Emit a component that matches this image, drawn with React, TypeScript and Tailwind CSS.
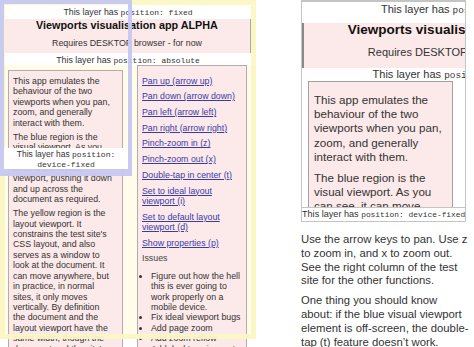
import React from "react";

const mono = "font-['Liberation_Mono','Courier_New',monospace]";

const links: string[][] = [
  ["Pan up (arrow up)"],
  ["Pan down (arrow down)"],
  ["Pan left (arrow left)"],
  ["Pan right (arrow right)"],
  ["Pinch-zoom in (z)"],
  ["Pinch-zoom out (x)"],
  ["Double-tap in center (t)"],
  ["Set to ideal layout", "viewport (i)"],
  ["Set to default layout", "viewport (d)"],
  ["Show properties (p)"],
];

const issues: string[][] = [
  ["Figure out how the hell", "this is ever going to", "work properly on a", "mobile device."],
  ["Fix ideal viewport bugs"],
  ["Add page zoom"],
  ["Add zoom reflow"],
  ["Add desktop viewport"],
];

const Lines = ({ lines }: { lines: string[] }) => (
  <>
    {lines.map((l, i) => (
      <React.Fragment key={i}>
        {l}
        {i < lines.length - 1 && <br />}
      </React.Fragment>
    ))}
  </>
);

const intro = [
  ["This app emulates the", "behaviour of the two", "viewports when you pan,", "zoom, and generally", "interact with them."],
  [
    "The blue region is the",
    "visual viewport. As you",
    "can see, it can move",
    "around the layout",
    "viewport, pushing it down",
    "and up across the",
    "document as required.",
  ],
  [
    "The yellow region is the",
    "layout viewport. It",
    "constrains the test site's",
    "CSS layout, and also",
    "serves as a window to",
    "look at the document. It",
    "can move anywhere, but",
    "in practice, in normal",
    "sites, it only moves",
    "vertically. By definition",
    "the document and the",
    "layout viewport have the",
    "same width, though the",
    "document and the site's",
  ],
];

const LeftSim = () => (
  <div className="relative w-[265px] h-[347px] overflow-hidden shrink-0 bg-white">
    <div className="absolute left-0 top-0 w-[256px] h-[339px] bg-[#fffdea]" />

    {/* document */}
    <div className="relative w-[256px] text-[#333] whitespace-nowrap">
      <div className="h-[19px] bg-white pt-[6px] text-center text-[8.8px] leading-[12px]">
        This layer has <span className={`${mono} text-[8px]`}>position: fixed</span>
      </div>
      <div className="w-[251px] h-[34px] bg-[#fce9e9] border-r border-[#a8a8a8] pl-[4px] text-center">
        <div className="font-bold text-[10.8px] leading-[12px] text-[#111]">Viewports visualisation app ALPHA</div>
        <div className="mt-[7px] text-[8.8px] leading-[10px]">Requires DESKTOP browser - for now</div>
      </div>
      <div className="h-[12px] bg-white pt-[2px] text-center text-[8.8px] leading-[10px]">
        This layer has <span className={`${mono} text-[8px]`}>position: absolute</span>
      </div>

      <div className="flex items-start">
        <div className="ml-[8px] mt-[5px] w-[115px] border border-[#b4acac] bg-[#fce9e9] pl-[4px] pt-[5px] pb-[20px] text-[8.8px] leading-[10.4px]">
          {intro.map((p, i) => (
            <p key={i} className={i > 0 ? "mt-[3.7px]" : ""}>
              <Lines lines={p} />
            </p>
          ))}
        </div>

        <div className="ml-[14px] w-[110px] border border-[#b4acac] bg-[#fce9e9] pl-[4px] pt-[9.6px] pb-[20px] text-[8.8px] leading-[10.4px]">
          {links.map((l, i) => (
            <a key={i} className="block mb-[5.3px] text-[#3a3aa8] underline">
              <Lines lines={l} />
            </a>
          ))}
          <div className="mt-[2px] mb-[7px] text-[#444]">Issues</div>
          <ul className="list-disc pl-[9px]">
            {issues.map((l, i) => (
              <li key={i}>
                <Lines lines={l} />
              </li>
            ))}
          </ul>
        </div>
      </div>
    </div>

    {/* layout viewport */}
    <div className="absolute left-0 top-0 w-[256px] h-[339px] border-[5px] border-[#fbf7c3]/95" />

    {/* visual viewport */}
    <div className="absolute left-0 top-0 w-[132px] h-[176px] border-[4px] border-b-[7px] border-[#c6c7f2]/95">
      <div className="absolute left-0 right-0 bottom-0 h-[21px] bg-white pt-[1px] text-center text-[8.5px] leading-[10px] text-[#333] whitespace-nowrap">
        <div>
          This layer has <span className={`${mono} text-[8px]`}>position:</span>
        </div>
        <div className={`${mono} text-[8px]`}>device-fixed</div>
      </div>
    </div>
  </div>
);

const RightPanel = () => (
  <div className="pl-[36px] text-[#333]">
    <div className="relative w-[165px] h-[222px] border border-t-[2px] border-[#c4c4c4] overflow-hidden bg-white">
      <div className="w-[314px] whitespace-nowrap">
        <div className="h-[21px] bg-white text-center text-[11px] leading-[14px]">
          This layer has <span className={`${mono} text-[9.4px]`}>position: fixed</span>
        </div>
        <div className="h-[45px] bg-[#fce9e9] border-l-[2px] border-[#8a8a8a] pl-[3px] text-center">
          <div className="font-bold text-[13.5px] leading-[14px] text-[#111]">Viewports visualisation app ALPHA</div>
          <div className="mt-[8px] text-[11px] leading-[14px]">Requires DESKTOP browser - for now</div>
        </div>
        <div className="h-[13px] bg-white text-center text-[11px] leading-[13px]">
          This layer has <span className={`${mono} text-[9.4px]`}>position: absolute</span>
        </div>
        <div className="ml-[6px] w-[145px] border border-[#a8a0a0] bg-[#fce9e9] pl-[5px] pt-[10.9px] pb-[20px] text-[11.6px] leading-[14.2px]">
          {intro.map((p, i) => (
            <p key={i} className={i > 0 ? "mt-[6.8px]" : ""}>
              <Lines lines={p} />
            </p>
          ))}
        </div>
      </div>
      <div className="absolute left-0 right-0 bottom-0 h-[14px] border-t border-[#c4c4c4] bg-white text-center text-[9.1px] leading-[13px] whitespace-nowrap">
        This layer has <span className={`${mono} text-[7.9px]`}>position: device-fixed</span>
      </div>
    </div>

    <div className="mt-[11px] text-[11.3px] leading-[13.8px] whitespace-nowrap">
      <p>
        <Lines
          lines={[
            "Use the arrow keys to pan. Use z",
            "to zoom in, and x to zoom out.",
            "See the right column of the test",
            "site for the other functions.",
          ]}
        />
      </p>
      <p className="mt-[6.3px]">
        <Lines
          lines={[
            "One thing you should know",
            "about: if the blue visual viewport",
            "element is off-screen, the double-",
            "tap (t) feature doesn\u2019t work.",
          ]}
        />
      </p>
    </div>
  </div>
);

export default function App() {
  return (
    <div className="flex w-[474px] h-[347px] overflow-hidden bg-white font-['Liberation_Sans',Arial,sans-serif]">
      <LeftSim />
      <RightPanel />
    </div>
  );
}
